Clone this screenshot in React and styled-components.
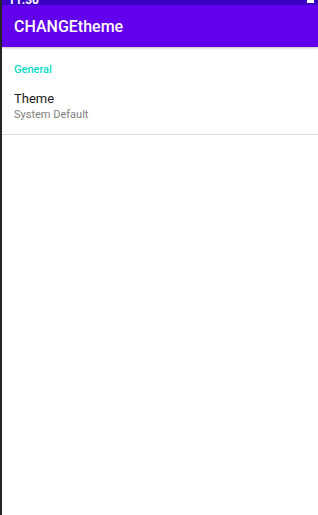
import React from 'react';
import styled, { createGlobalStyle } from 'styled-components';

const GlobalStyle = createGlobalStyle`
  html, body {
    margin: 0;
    padding: 0;
    height: 100%;
    background: #ffffff;
  }
  #root {
    height: 100%;
  }
`;

const Frame = styled.div`
  display: flex;
  height: 515px;
  width: 318px;
  font-family: Roboto, 'Noto Sans', sans-serif;
  overflow: hidden;
`;

const LeftEdge = styled.div`
  width: 2px;
  flex: none;
  background: #262626;
`;

const Screen = styled.div`
  flex: 1;
  display: flex;
  flex-direction: column;
  background: #ffffff;
`;

const StatusBar = styled.div`
  height: 5px;
  background: #3a00c4;
  overflow: hidden;
  display: flex;
  justify-content: space-between;
  align-items: flex-end;
  padding: 0 4px 0 6px;
`;

const Clock = styled.span`
  color: #ffffff;
  font-size: 12px;
  font-weight: 700;
  line-height: 12px;
  margin-bottom: -1px;
`;

const Battery = styled.span`
  width: 7px;
  height: 3px;
  background: #ffffff;
  align-self: flex-start;
`;

const Toolbar = styled.div`
  height: 42px;
  background: #6200ee;
  display: flex;
  align-items: center;
  padding: 0 12px;
  box-shadow: 0 1px 2px rgba(0, 0, 0, 0.25);
`;

const Title = styled.h1`
  margin: 0;
  color: #ffffff;
  font-size: 16px;
  font-weight: 500;
`;

const Category = styled.div`
  color: #03dac5;
  font-size: 11px;
  font-weight: 500;
  padding: 16px 12px 0;
  line-height: 13px;
`;

const Preference = styled.div`
  padding: 14px 12px 12px;
  border-bottom: 1px solid #e0e0e0;
`;

const PrefTitle = styled.div`
  color: #212121;
  font-size: 13px;
  line-height: 17px;
`;

const PrefSummary = styled.div`
  color: #808080;
  font-size: 11px;
  line-height: 15px;
`;

export default function App() {
  return (
    <>
      <GlobalStyle />
      <Frame>
        <LeftEdge />
        <Screen>
          <StatusBar>
            <Clock>11:30</Clock>
            <Battery />
          </StatusBar>
          <Toolbar>
            <Title>CHANGEtheme</Title>
          </Toolbar>
          <Category>General</Category>
          <Preference>
            <PrefTitle>Theme</PrefTitle>
            <PrefSummary>System Default</PrefSummary>
          </Preference>
        </Screen>
      </Frame>
    </>
  );
}
